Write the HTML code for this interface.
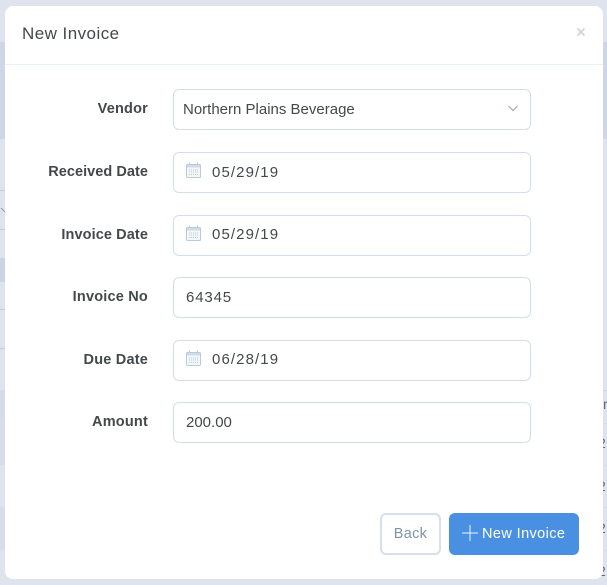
<!DOCTYPE html>
<html>
<head>
<meta charset="utf-8">
<style>
html,body{margin:0;padding:0}
body{width:607px;height:585px;overflow:hidden;position:relative;background:#dfe3ee;font-family:"Liberation Sans",sans-serif;color:#3f4244}
.a{position:absolute}
.modal{position:absolute;left:5px;top:6px;width:598px;height:573px;background:#fff;border-radius:8px}
.lbl{position:absolute;right:459px;font-size:14.5px;font-weight:bold;color:#45484a;white-space:nowrap;line-height:20px;letter-spacing:.2px}
.inp{position:absolute;left:173px;width:356px;box-sizing:content-box;border:1px solid #d3deeb;border-radius:6px;background:#fff}
.val{position:absolute;font-size:15px;line-height:20px;color:#45484a;white-space:nowrap}
.d{letter-spacing:1.1px}
.cal{position:absolute;left:186px}
.bg{position:absolute;font-size:14px;line-height:16px;color:#5f6a78}
</style>
</head>
<body>
<div class="a" style="left:0;top:42px;width:5px;height:97px;background:#cfd6e7"></div>
<div class="a" style="left:603px;top:42px;width:4px;height:97px;background:#cfd6e7"></div>
<div class="a" style="left:0;top:190px;width:5px;height:1px;background:#c3cde0"></div>
<div class="a" style="left:0;top:229px;width:5px;height:1px;background:#c3cde0"></div>
<div class="a" style="left:0;top:258px;width:5px;height:24px;background:#cbd3e5"></div>
<div class="a" style="left:0;top:309px;width:5px;height:1px;background:#c3cde0"></div>
<div class="a" style="left:0;top:348px;width:5px;height:1px;background:#c3cde0"></div>
<div class="a" style="left:0;top:390px;width:5px;height:31px;background:#d6dbe9"></div>
<div class="a" style="left:0;top:421px;width:5px;height:44px;background:#d8dcea"></div>
<div class="a" style="left:0;top:507px;width:5px;height:43px;background:#d8dcea"></div>
<svg class="a" style="left:0;top:207px" width="5" height="6" viewBox="0 0 5 6"><path d="M1 1L5 5" stroke="#8f9db3" stroke-width="1" fill="none"/></svg>
<div class="a" style="left:603px;top:390px;width:4px;height:1px;background:#cfd6e7"></div>
<div class="a" style="left:603px;top:423px;width:4px;height:1px;background:#d3d9e8"></div>
<div class="a" style="left:603px;top:465px;width:4px;height:1px;background:#d3d9e8"></div>
<div class="a" style="left:603px;top:507px;width:4px;height:1px;background:#d3d9e8"></div>
<div class="a" style="left:603px;top:550px;width:4px;height:1px;background:#d3d9e8"></div>
<div class="bg" style="left:603px;top:396px">r</div>
<div class="bg" style="left:598px;top:435px">2</div>
<div class="bg" style="left:598px;top:478px">2</div>
<div class="bg" style="left:598px;top:520px">2</div>
<div class="bg" style="left:598px;top:563px">2</div>

<div class="modal"></div>
<div class="a" style="left:5px;top:64px;width:598px;height:1px;background:#e9eff6"></div>
<div class="a" style="left:22px;top:23px;font-size:17px;line-height:22px;color:#45484a;letter-spacing:.45px;white-space:nowrap">New Invoice</div>
<svg class="a" style="left:577px;top:28px" width="8" height="8" viewBox="0 0 8 8"><path d="M.5 .5L7.5 7.5M7.5 .5L.5 7.5" stroke="#d0d8e3" stroke-width="2" fill="none"/></svg>

<div class="lbl" style="top:99px">Vendor</div>
<div class="lbl" style="top:162px;letter-spacing:.05px">Received Date</div>
<div class="lbl" style="top:225px;letter-spacing:.1px">Invoice Date</div>
<div class="lbl" style="top:287px">Invoice No</div>
<div class="lbl" style="top:350px">Due Date</div>
<div class="lbl" style="top:412px">Amount</div>

<div class="inp" style="top:89px;height:39px"></div>
<div class="val" style="left:183px;top:100px">Northern Plains Beverage</div>
<svg class="a" style="left:508px;top:105px" width="10" height="7" viewBox="0 0 10 7"><path d="M.5 1L5 5.5L9.5 1" stroke="#8fa3b8" stroke-width="1" fill="none"/></svg>

<div class="inp" style="top:152px;height:39px"></div>
<div class="val d" style="left:212px;top:163px">05/29/19</div>
<div class="inp" style="top:215px;height:39px"></div>
<div class="val d" style="left:212px;top:225px">05/29/19</div>
<div class="inp" style="top:277px;height:39px"></div>
<div class="val" style="left:186px;top:288px;letter-spacing:.85px">64345</div>
<div class="inp" style="top:340px;height:39px"></div>
<div class="val d" style="left:212px;top:350px">06/28/19</div>
<div class="inp" style="top:402px;height:39px"></div>
<div class="val" style="left:186px;top:413px">200.00</div>

<svg class="cal" style="top:162px" width="15" height="16" viewBox="0 0 15 16"><rect x=".5" y="2.5" width="14" height="13" rx="1" fill="#f4f7fa" stroke="#bccada"/><rect x="1" y="3" width="13" height="2.5" fill="#d0dbe7"/><path d="M3.5 .5V3M11.5 .5V3" stroke="#bccada"/><path d="M3 8h9M3 10h9M3 12.5h9" stroke="#bccada" stroke-dasharray="1 1"/></svg>
<svg class="cal" style="top:225px" width="15" height="16" viewBox="0 0 15 16"><rect x=".5" y="2.5" width="14" height="13" rx="1" fill="#f4f7fa" stroke="#bccada"/><rect x="1" y="3" width="13" height="2.5" fill="#d0dbe7"/><path d="M3.5 .5V3M11.5 .5V3" stroke="#bccada"/><path d="M3 8h9M3 10h9M3 12.5h9" stroke="#bccada" stroke-dasharray="1 1"/></svg>
<svg class="cal" style="top:350px" width="15" height="16" viewBox="0 0 15 16"><rect x=".5" y="2.5" width="14" height="13" rx="1" fill="#f4f7fa" stroke="#bccada"/><rect x="1" y="3" width="13" height="2.5" fill="#d0dbe7"/><path d="M3.5 .5V3M11.5 .5V3" stroke="#bccada"/><path d="M3 8h9M3 10h9M3 12.5h9" stroke="#bccada" stroke-dasharray="1 1"/></svg>

<div class="a" style="left:380px;top:513px;width:57px;height:38px;border:2px solid #d5e0ed;border-radius:6px;background:#fff"></div>
<div class="a" style="left:380px;top:524px;width:61px;text-align:center;font-size:14.5px;line-height:20px;color:#7f92ab;letter-spacing:.3px">Back</div>
<div class="a" style="left:449px;top:513px;width:130px;height:42px;background:#4a90e2;border-radius:6px"></div>
<svg class="a" style="left:462px;top:525px" width="16" height="16" viewBox="0 0 16 16"><path d="M8 0V16M0 8H16" stroke="#eaf3fc" stroke-width="1" fill="none"/></svg>
<div class="a" style="left:482px;top:524px;font-size:14.5px;line-height:20px;color:#fff;letter-spacing:.4px;white-space:nowrap">New Invoice</div>
</body>
</html>
